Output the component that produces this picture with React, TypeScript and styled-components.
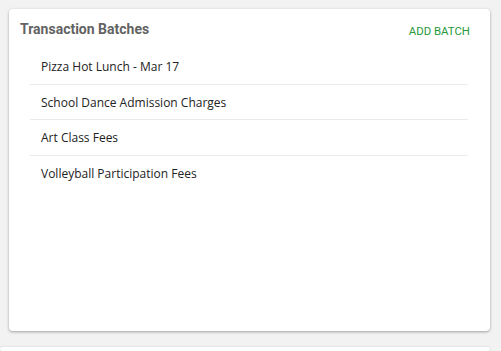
import React from "react";
import styled, { createGlobalStyle } from "styled-components";

const GlobalStyle = createGlobalStyle`
  html, body {
    margin: 0;
    padding: 0;
    background: #f2f2f2;
    overflow: hidden;
  }
  body {
    font-family: Roboto, "Liberation Sans", sans-serif;
  }
`;

const Page = styled.div`
  padding: 9px 11px 0 9px;
`;

const Card = styled.div`
  background: #fff;
  border-radius: 4px;
  box-shadow: 0 1px 3px rgba(0, 0, 0, 0.35);
  height: 322px;
  box-sizing: border-box;
  padding: 10px 20px 0 11px;
`;

const NextCard = styled.div`
  background: #fff;
  border-radius: 4px;
  box-shadow: 0 0 2px rgba(0, 0, 0, 0.2);
  margin: 16px 0 0 -9px;
  height: 4px;
`;

const Header = styled.div`
  display: flex;
  justify-content: space-between;
  align-items: flex-start;
`;

const Title = styled.h2`
  margin: 0;
  font-family: Roboto, "Liberation Sans", sans-serif;
  font-weight: 700;
  font-size: 14px;
  line-height: 20px;
  color: #636363;
`;

const AddButton = styled.button`
  background: none;
  border: none;
  padding: 0;
  margin-top: 4px;
  font-family: Roboto, "Liberation Sans", sans-serif;
  font-size: 11.4px;
  line-height: 16px;
  text-transform: uppercase;
  color: #27993a;
  cursor: pointer;
`;

const List = styled.ul`
  list-style: none;
  margin: 10px 2px 0 10px;
  padding: 0;
`;

const Item = styled.li`
  padding: 10px 11px 9.5px;
  font-family: "Open Sans", "Noto Sans", sans-serif;
  font-size: 12px;
  line-height: 15px;
  color: #222;
  border-bottom: 1px solid #ebebeb;

  &:last-child {
    border-bottom: none;
  }
`;

const batches = [
  "Pizza Hot Lunch - Mar 17",
  "School Dance Admission Charges",
  "Art Class Fees",
  "Volleyball Participation Fees",
];

export default function App() {
  return (
    <>
      <GlobalStyle />
      <Page>
        <Card>
          <Header>
            <Title>Transaction Batches</Title>
            <AddButton>Add Batch</AddButton>
          </Header>
          <List>
            {batches.map((b) => (
              <Item key={b}>{b}</Item>
            ))}
          </List>
        </Card>
        <NextCard />
      </Page>
    </>
  );
}
